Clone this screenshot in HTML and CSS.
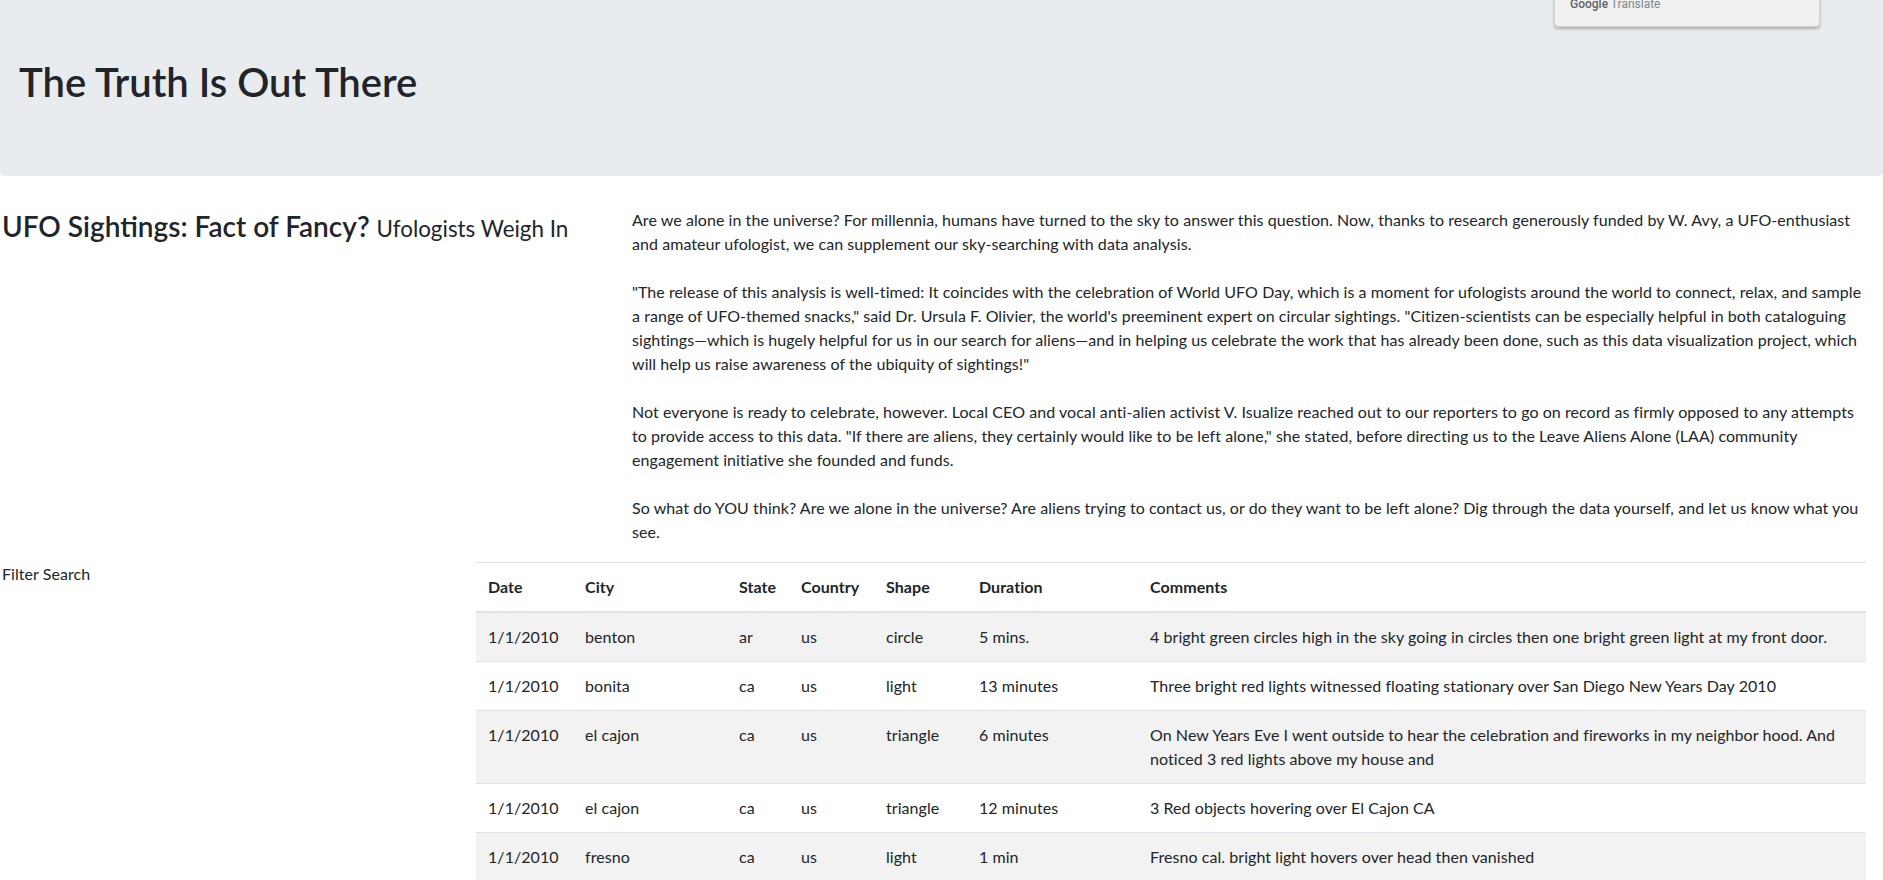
FILE: index.html
```html
<!DOCTYPE html>
<html lang="en">
<head>
<meta charset="utf-8">
<title>UFO Sightings</title>
<link rel="stylesheet" href="styles.css">
</head>
<body>
<div class="gt-popup"><span class="gt-google">Google</span> <span class="gt-translate">Translate</span></div>
<header class="jumbotron">
  <h1 class="jumbotron-title">The Truth Is Out There</h1>
</header>
<main class="page">
  <section class="intro">
    <div class="intro-heading">
      <h3 class="intro-title">UFO Sightings: Fact of Fancy? <small class="intro-sub">Ufologists Weigh In</small></h3>
    </div>
    <div class="intro-body">
      <p class="intro-text">Are we alone in the universe? For millennia, humans have turned to the sky to answer this question. Now, thanks to research generously funded by W. Avy, a UFO-enthusiast and amateur ufologist, we can supplement our sky-searching with data analysis.<br><br>"The release of this analysis is well-timed: It coincides with the celebration of World UFO Day, which is a moment for ufologists around the world to connect, relax, and sample a range of UFO-themed snacks," said Dr. Ursula F. Olivier, the world's preeminent expert on circular sightings. "Citizen-scientists can be especially helpful in both cataloguing sightings—which is hugely helpful for us in our search for aliens—and in helping us celebrate the work that has already been done, such as this data visualization project, which will help us raise awareness of the ubiquity of sightings!"<br><br>Not everyone is ready to celebrate, however. Local CEO and vocal anti-alien activist V. Isualize reached out to our reporters to go on record as firmly opposed to any attempts to provide access to this data. "If there are aliens, they certainly would like to be left alone," she stated, before directing us to the Leave Aliens Alone (LAA) community engagement initiative she founded and funds.<br><br>So what do YOU think? Are we alone in the universe? Are aliens trying to contact us, or do they want to be left alone? Dig through the data yourself, and let us know what you see.</p>
    </div>
  </section>
  <section class="data">
    <aside class="filters">
      <div class="filters-label">Filter Search</div>
    </aside>
    <div class="data-table-wrap">
      <table class="ufo-table">
        <colgroup>
          <col class="c-date"><col class="c-city"><col class="c-state"><col class="c-country"><col class="c-shape"><col class="c-duration"><col class="c-comments">
        </colgroup>
        <thead>
          <tr><th>Date</th><th>City</th><th>State</th><th>Country</th><th>Shape</th><th>Duration</th><th>Comments</th></tr>
        </thead>
        <tbody>
          <tr><td>1/1/2010</td><td>benton</td><td>ar</td><td>us</td><td>circle</td><td>5 mins.</td><td>4 bright green circles high in the sky going in circles then one bright green light at my front door.</td></tr>
          <tr><td>1/1/2010</td><td>bonita</td><td>ca</td><td>us</td><td>light</td><td>13 minutes</td><td>Three bright red lights witnessed floating stationary over San Diego New Years Day 2010</td></tr>
          <tr><td>1/1/2010</td><td>el cajon</td><td>ca</td><td>us</td><td>triangle</td><td>6 minutes</td><td>On New Years Eve I went outside to hear the celebration and fireworks in my neighbor hood. And noticed 3 red lights above my house and</td></tr>
          <tr><td>1/1/2010</td><td>el cajon</td><td>ca</td><td>us</td><td>triangle</td><td>12 minutes</td><td>3 Red objects hovering over El Cajon CA</td></tr>
          <tr><td>1/1/2010</td><td>fresno</td><td>ca</td><td>us</td><td>light</td><td>1 min</td><td>Fresno cal. bright light hovers over head then vanished</td></tr>
        </tbody>
      </table>
    </div>
  </section>
</main>
</body>
</html>
```

FILE: styles.css
```css
html, body {
  margin: 0;
  padding: 0;
  overflow: hidden;
  background: #fff;
}
body {
  font-family: Lato, Roboto, sans-serif;
  font-size: 16px;
  line-height: 24px;
  letter-spacing: 0.06px;
  color: #212529;
  position: relative;
}
.gt-popup {
  position: absolute;
  left: 1554px;
  top: -16px;
  width: 266px;
  height: 43px;
  box-sizing: border-box;
  background: #f1f1f1;
  border: 1px solid #d0d0d0;
  border-radius: 4px;
  box-shadow: 0 2px 3px rgba(0,0,0,.25);
  padding: 12px 0 0 15px;
  font-family: Roboto, "Liberation Sans", sans-serif;
  font-size: 12px;
  line-height: 14px;
  letter-spacing: 0;
  z-index: 5;
}
.gt-google { color: #5f6368; font-weight: 500; }
.gt-translate { color: #80868b; }
.jumbotron {
  background: #e9ecef;
  height: 176px;
  box-sizing: border-box;
  padding: 58px 0 0 19px;
  margin: 0 0 32px 0;
  border-radius: 0 0 5px 5px;
}
.jumbotron-title {
  margin: 0;
  font-family: "Lato Semibold", Roboto, sans-serif;
  font-size: 40px;
  font-weight: 500;
  line-height: 48px;
  letter-spacing: 0;
}
.page {
  padding-right: 17px;
}
.intro {
  display: grid;
  grid-template-columns: 632px 1fr;
}
.intro-title {
  margin: 1px 0 0 0;
  font-family: "Lato Semibold", Roboto, sans-serif;
  font-size: 28px;
  font-weight: 500;
  line-height: 34px;
  letter-spacing: 0;
  padding-left: 2px;
}
.intro-sub {
  font-family: Lato, Roboto, sans-serif;
  font-size: 80%;
  font-weight: 400;
}
.intro-text {
  margin: 0 0 16px 0;
}
.data {
  display: grid;
  grid-template-columns: 476px 1fr;
  margin-top: 2px;
}
.filters-label {
  padding: 0 0 0 2px;
}
.ufo-table {
  width: 100%;
  table-layout: fixed;
  border-collapse: collapse;
}
.c-date { width: 97px; }
.c-city { width: 154px; }
.c-state { width: 62px; }
.c-country { width: 85px; }
.c-shape { width: 93px; }
.c-duration { width: 171px; }
.ufo-table th,
.ufo-table td {
  padding: 12px;
  text-align: left;
  vertical-align: top;
  border-top: 1px solid #dee2e6;
}
.ufo-table th {
  font-weight: 700;
  vertical-align: bottom;
  border-bottom: 2px solid #dee2e6;
}
.ufo-table tbody tr:nth-child(odd) {
  background: #f2f2f2;
}
```
